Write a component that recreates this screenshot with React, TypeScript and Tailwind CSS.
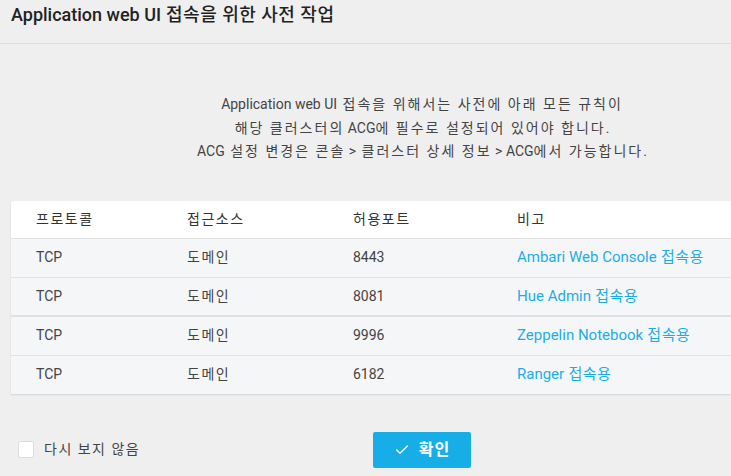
import { Check } from 'lucide-react'
import type { ReactNode } from 'react'

const rows = [
  { protocol: 'TCP', source: '도메인', port: '8443', note: 'Ambari Web Console 접속용' },
  { protocol: 'TCP', source: '도메인', port: '8081', note: 'Hue Admin 접속용' },
  { protocol: 'TCP', source: '도메인', port: '9996', note: 'Zeppelin Notebook 접속용' },
  { protocol: 'TCP', source: '도메인', port: '6182', note: 'Ranger 접속용' },
]

const font = { fontFamily: 'Roboto, "Noto Sans CJK KR", sans-serif' }

// the korean glyphs in the original run wider than Noto CJK, so space out hangul runs
function K({ children, wide = 'tracking-[2px]' }: { children: string; wide?: string }) {
  const parts: ReactNode[] = []
  children.split(/(\s?[\uAC00-\uD7A3]+(?:\s[\uAC00-\uD7A3]+)*)/).forEach((p, i) => {
    if (!p) return
    if (/[\uAC00-\uD7A3]/.test(p)) parts.push(<span key={i} className={wide}>{p}</span>)
    else parts.push(p)
  })
  return <>{parts}</>
}

export default function App() {
  return (
    <div className="w-[731px] h-[476px] overflow-hidden bg-[#efefef]" style={font}>
      <div className="w-[844px]">
        <div className="h-[44px] px-[11px] pt-[3px] border-b border-[#dedede]">
          <h2 className="text-[18px] font-medium text-[#222] leading-[24px]">
            <K wide="tracking-[0.5px]">Application web UI 접속을 위한 사전 작업</K>
          </h2>
        </div>

        <div className="px-[11px]">
          <div className="pt-[49px] pb-[37px] text-center text-[14px] leading-[23.5px] text-[#444]">
            <p><K>Application web UI 접속을 위해서는 사전에 아래 모든 규칙이</K></p>
            <p><K>해당 클러스터의 ACG에 필수로 설정되어 있어야 합니다.</K></p>
            <p><K>ACG 설정 변경은 콘솔 &gt; 클러스터 상세 정보 &gt; ACG에서 가능합니다.</K></p>
          </div>

          <div className="bg-white rounded-t-[3px] shadow-[0_1px_2px_rgba(0,0,0,0.12)] text-[14px]">
            <div className="grid grid-cols-[151px_166px_164px_1fr] h-[38px] items-center px-[25px] text-[#333] border-b border-[#e2e2e2]">
              <span><K wide="tracking-[1.5px]">프로토콜</K></span>
              <span><K wide="tracking-[1.5px]">접근소스</K></span>
              <span><K wide="tracking-[1.5px]">허용포트</K></span>
              <span><K wide="tracking-[1.5px]">비고</K></span>
            </div>
            {rows.map((r, i) => (
              <div
                key={i}
                className={`grid grid-cols-[151px_166px_164px_1fr] items-center px-[25px] bg-[#f5f6f8] text-[#444] ${
                  i === 1
                    ? 'h-[39px] border-b-2 border-[#e0e0e0]'
                    : i < rows.length - 1
                      ? 'h-[39px] border-b border-[#e2e2e2]'
                      : 'h-[38px]'
                }`}
              >
                <span>{r.protocol}</span>
                <span><K wide="tracking-[1.5px]">{r.source}</K></span>
                <span>{r.port}</span>
                <span className="text-[#1aaee9] text-[15px]"><K wide="tracking-[0.5px]">{r.note}</K></span>
              </div>
            ))}
          </div>

          <div className="relative flex items-center justify-center pt-[38px]">
            <label className="absolute left-[7px] top-[45px] flex items-center gap-[10px] text-[14px] text-[#444]">
              <span className="w-[16px] h-[17px] bg-white border border-[#dcdcdc] rounded-[2px]" />
              <K wide="tracking-[1.5px]">다시 보지 않음</K>
            </label>
            <button className="flex items-center justify-center gap-[9px] w-[98px] h-[36px] bg-[#17aee8] rounded-[2px] text-white text-[16px] font-bold">
              <Check className="w-[16px] h-[16px]" strokeWidth={2} />
              <K wide="tracking-[1px]">확인</K>
            </button>
          </div>
        </div>
      </div>
    </div>
  )
}
